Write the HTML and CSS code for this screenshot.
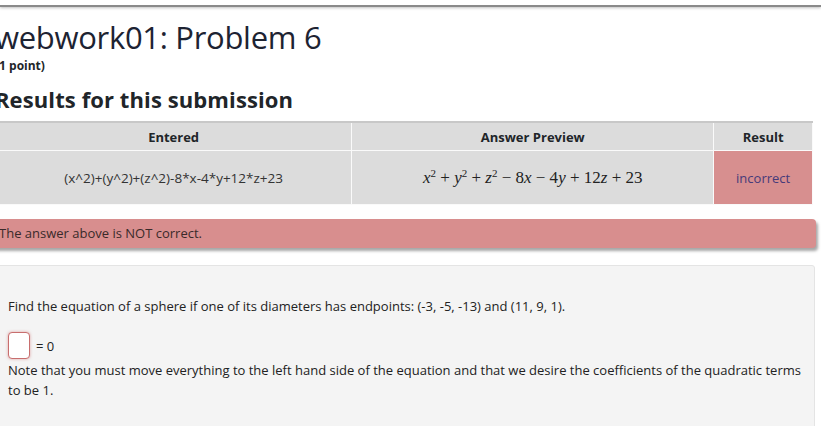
FILE: index.html
```html
<!DOCTYPE html>
<html>
<head>
<meta charset="utf-8">
<link rel="stylesheet" href="styles.css">
</head>
<body>
<div class="topbar"></div>
<main class="content">
  <h1 class="title">webwork01: Problem 6</h1>
  <div class="points">(1 point)</div>
  <h2 class="results-title">Results for this submission</h2>
  <table class="attempts">
    <thead>
      <tr>
        <th class="col-entered">Entered</th>
        <th class="col-preview">Answer Preview</th>
        <th class="col-result">Result</th>
      </tr>
    </thead>
    <tbody>
      <tr>
        <td>(x^2)+(y^2)+(z^2)-8*x-4*y+12*z+23</td>
        <td class="math"><i>x</i><sup>2</sup> + <i>y</i><sup>2</sup> + <i>z</i><sup>2</sup> − 8<i>x</i> − 4<i>y</i> + 12<i>z</i> + 23</td>
        <td class="incorrect">incorrect</td>
      </tr>
    </tbody>
  </table>
  <div class="alert">The answer above is NOT correct.</div>
  <div class="problem">
    <p class="q">Find the equation of a sphere if one of its diameters has endpoints: (-3, -5, -13) and (11, 9, 1).</p>
    <div class="answer-line"><span class="answer-box"></span><span class="eq">= 0</span></div>
    <p class="note">Note that you must move everything to the left hand side of the equation and that we desire the coefficients of the quadratic terms to be 1.</p>
  </div>
</main>
</body>
</html>
```
FILE: styles.css
```css
html, body {
  margin: 0;
  padding: 0;
  background: #ffffff;
  overflow: hidden;
}
body {
  font-family: "Open Sans", "Noto Sans", sans-serif;
  color: #212529;
  font-size: 13px;
}
.topbar {
  height: 5px;
  border-bottom: 2px solid #8a8a8a;
  box-shadow: 0 1px 3px rgba(0,0,0,0.25);
}
.content {
  margin-left: -5px;
  width: 818px;
}
.title {
  font-size: 31px;
  font-weight: 400;
  margin: 10px 0 0 0;
  line-height: 40px;
  color: #1d2332;
  letter-spacing: -0.3px;
}
.points {
  font-size: 12px;
  font-weight: 700;
  line-height: 16px;
  margin-top: 1px;
}
.results-title {
  font-size: 22px;
  font-weight: 700;
  line-height: 30px;
  margin: 10px 0 7px 0;
  letter-spacing: 0.1px;
}
.attempts {
  border-collapse: collapse;
  width: 818px;
  background: #dcdcdc;
  font-size: 13px;
}
.attempts th {
  height: 25px;
  font-weight: 700;
  border: 1px solid #fafafa;
}
.attempts td {
  height: 51px;
  text-align: center;
  border: 1px solid #fafafa;
  color: #333;
}
.attempts td:first-child { font-size: 13.5px; }
.attempts thead tr { border-top: 2px solid #c8c8c8; }
.col-entered { width: 355px; }
.col-preview { width: 361px; }
.col-result { width: 96px; }
.attempts td.math {
  font-family: "Liberation Serif", "DejaVu Serif", serif;
  font-size: 17px;
  color: #222;
}
.math sup { font-size: 11px; vertical-align: 6px; }
.attempts td.incorrect {
  background: #d78f8f;
  color: #463a7a;
}
.alert {
  margin-top: 14px;
  background: #d88e8e;
  height: 29px;
  line-height: 29px;
  padding-left: 4px;
  width: 817px;
  border-radius: 0 4px 4px 0;
  box-shadow: 2px 3px 3px rgba(0,0,0,0.35);
  color: #3a2a2a;
}
.problem {
  margin-top: 17px;
  background: #f4f4f4;
  border: 1px solid #e4e4e4;
  border-radius: 3px;
  width: 806px;
  padding: 18px 0 40px 12px;
  font-size: 13px;
  color: #222;
}
.q {
  margin: 12px 0 0 0;
  line-height: 20px;
}
.answer-line {
  display: flex;
  align-items: center;
  gap: 6px;
  margin-top: 16px;
}
.answer-box {
  width: 20px;
  height: 25px;
  background: #fff;
  border: 1px solid #c86e6e;
  border-radius: 4px;
  box-shadow: 0 0 3px rgba(200,80,80,0.5);
}
.note {
  margin: 1px 0 0 0;
  line-height: 20px;
  padding-right: 4px;
}
```
